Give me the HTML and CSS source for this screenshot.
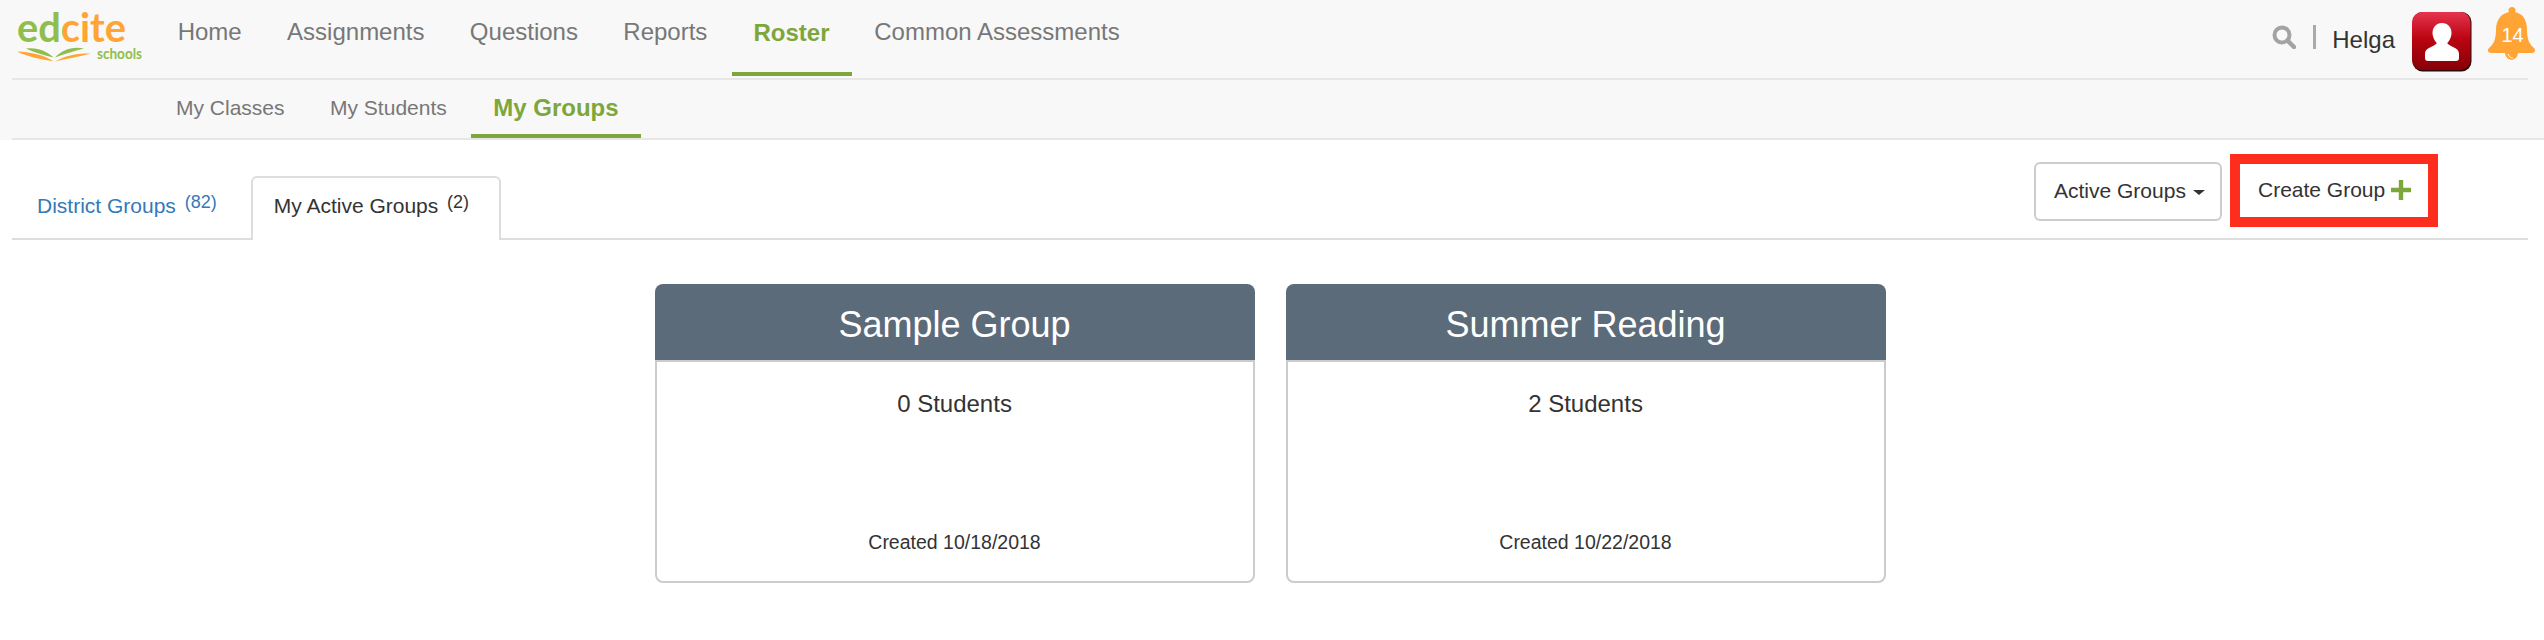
FILE: index.html
```html
<!DOCTYPE html>
<html lang="en">
<head>
    <meta charset="UTF-8">
    <title>Edcite - My Groups</title>
    <link rel="stylesheet" href="styles.css">
</head>
<body>
    <header class="topbar">
        <div class="main-row">
            <svg class="logo" viewBox="12 0 143 78" width="143" height="78">
                <defs>
                    <linearGradient id="logo-fill" gradientUnits="userSpaceOnUse" x1="17" y1="0" x2="126" y2="0">
                        <stop offset="0.42" stop-color="#8fbe4c"/>
                        <stop offset="0.42" stop-color="#ffa435"/>
                    </linearGradient>
                </defs>
                <text class="logo-word" x="17" y="42" font-size="41" fill="url(#logo-fill)" textLength="109" lengthAdjust="spacingAndGlyphs">edcite</text>
                <text class="logo-sub" x="97" y="59" font-size="14.5" textLength="45" lengthAdjust="spacingAndGlyphs">schools</text>
                <path d="M26 48.5 C37 47 47 51 53.5 57.5 C44 55 35 53 26 48.5Z" fill="#8fbe4c"/>
                <path d="M55 57.5 C62 50 72 46 84 48.5 C74 51 64 54 55 57.5Z" fill="#8fbe4c"/>
                <path d="M17 51.5 C30 52 45 55 53.5 61.5 C41 59 28 57 17 51.5Z" fill="#ffa435"/>
                <path d="M55 61.5 C65 55.5 78 53 91 53.5 C79 56.5 66 59 55 61.5Z" fill="#ffa435"/>
            </svg>
            <nav class="main-nav">
                <a href="#">Home</a>
                <a href="#">Assignments</a>
                <a href="#">Questions</a>
                <a href="#">Reports</a>
                <a href="#" class="active">Roster</a>
                <a href="#">Common Assessments</a>
            </nav>
            <div class="user-area">
                <svg class="search-icon" viewBox="0 0 24 24" width="24" height="24">
                    <circle cx="10" cy="10" r="7.5" fill="none" stroke="#a3a3a3" stroke-width="4"/>
                    <path d="M15.5 15.5 L22 22" stroke="#a3a3a3" stroke-width="4.5" stroke-linecap="round"/>
                </svg>
                <span class="separator"></span>
                <span class="user-name">Helga</span>
                <svg class="avatar" viewBox="0 0 60 60" width="60" height="60">
                    <defs>
                        <linearGradient id="avatar-fill" x1="0" y1="0" x2="0" y2="1">
                            <stop offset="0" stop-color="#e6344f"/>
                            <stop offset="0.45" stop-color="#bb0512"/>
                            <stop offset="1" stop-color="#870006"/>
                        </linearGradient>
                    </defs>
                    <rect x="0.5" y="0" width="59" height="59.5" rx="10" fill="#2a0a0c"/>
                    <rect x="0" y="0" width="58.5" height="58" rx="10" fill="url(#avatar-fill)"/>
                    <path d="M30 11 C36 11 39.500 15.500 39.500 21 C39.500 26 36 31 33 33 L27 33 C24 31 20.500 26 20.500 21 C20.500 15.500 24 11 30 11Z" fill="#fff"/>
                    <path d="M25 31 L35 31 C39 36 47 35 47 42 L47 46 Q47 49 44 49 L16 49 Q13 49 13 46 L13 42 C13 35 21 36 25 31Z" fill="#fff"/>
                </svg>
                <div class="bell">
                    <svg viewBox="0 0 47 54" width="47" height="54">
                        <circle cx="24" cy="3.5" r="3.5" fill="#ffa435"/>
                        <path d="M24 5 C13 5 8 13 8 23 C8 33 5 38 1 41 C-1 43 0 46 3 46 L44 46 C47 46 48 43 46 41 C42 38 39 33 39 23 C39 13 35 5 24 5Z" fill="#ffa435"/>
                        <path d="M17 46 C18 55 29 55 30 46Z" fill="#ffa435"/>
                        <path d="M20 47 C21 50 23 51 25 51" fill="none" stroke="#fff" stroke-width="1"/>
                    </svg>
                    <span class="bell-count">14</span>
                </div>
            </div>
        </div>
        <div class="sub-row">
            <nav class="sub-nav">
                <a href="#">My Classes</a>
                <a href="#">My Students</a>
                <a href="#" class="active">My Groups</a>
            </nav>
        </div>
    </header>

    <main class="content">
        <div class="tab-row">
            <div class="tabs">
                <a href="#" class="tab">District Groups <sup>(82)</sup></a>
                <a href="#" class="tab active">My Active Groups <sup>(2)</sup></a>
            </div>
            <div class="tools">
                <button type="button" class="btn-filter">Active Groups <span class="caret"></span></button>
                <button type="button" class="btn-create">Create Group
                    <svg viewBox="0 0 20 20" width="20" height="20"><path d="M7.800 0h4.400v7.800H20v4.400h-7.800V20H7.800v-7.800H0V7.800h7.800z" fill="#7da63b"/></svg>
                </button>
            </div>
        </div>

        <div class="cards">
            <div class="card">
                <div class="card-title">Sample Group</div>
                <div class="card-body">
                    <p class="student-count">0 Students</p>
                    <p class="created">Created 10/18/2018</p>
                </div>
            </div>
            <div class="card">
                <div class="card-title">Summer Reading</div>
                <div class="card-body">
                    <p class="student-count">2 Students</p>
                    <p class="created">Created 10/22/2018</p>
                </div>
            </div>
        </div>
    </main>
</body>
</html>
```

FILE: styles.css
```css
* {
    box-sizing: border-box;
}
body {
    font-family: "Liberation Sans", Arial, sans-serif;
    background-color: #fff;
    color: #333;
    margin: 0;
    padding: 0;
    overflow: hidden;
}
a {
    text-decoration: none;
}

/* top bars */
.topbar {
    background-color: #f8f8f8;
    height: 140px;
}
.main-row {
    display: flex;
    height: 80px;
    margin: 0 16px 0 12px;
    border-bottom: 2px solid #e7e7e7;
}
.logo {
    flex: none;
}
.logo-word {
    font-family: Lato, sans-serif;
    font-weight: 700;
}
.logo-sub {
    font-family: Lato, sans-serif;
    font-weight: 700;
    fill: #8fbe4c;
}
.main-nav {
    display: flex;
}
.main-nav a {
    display: block;
    height: 76px;
    padding: 15px 22.7px 0;
    font-size: 24px;
    line-height: 34px;
    color: #777;
}
.main-nav a.active {
    margin-left: 1.5px;
    padding: 16px 22px 0;
    font-weight: bold;
    color: #7da63b;
    border-bottom: 4px solid #7da63b;
}
.user-area {
    display: flex;
    align-items: center;
    margin-left: auto;
    margin-right: -7px;
}
.search-icon {
    margin-bottom: 4px;
}
.separator {
    width: 3px;
    height: 24px;
    margin: 0 16px 4px 17px;
    background-color: #aaa;
}
.user-name {
    font-size: 24px;
    line-height: 34px;
    margin-top: 2px;
}
.avatar {
    margin: 6px 16px 0 17px;
}
.bell {
    position: relative;
    width: 47px;
    height: 54px;
    margin-bottom: 10px;
}
.bell svg {
    display: block;
    overflow: visible;
}
.bell-count {
    position: absolute;
    top: 17px;
    left: 0;
    width: 49px;
    text-align: center;
    font-size: 20px;
    line-height: 22px;
    color: #fff;
}
.sub-row {
    height: 60px;
    margin-left: 12px;
    border-bottom: 2px solid #e7e7e7;
}
.sub-nav {
    display: flex;
    margin-left: 141px;
}
.sub-nav a {
    display: block;
    height: 58px;
    padding: 13px 22.5px 0 23px;
    font-size: 21px;
    line-height: 30px;
    color: #777;
}
.sub-nav a.active {
    margin-left: 2px;
    padding: 13px 22px 0;
    font-size: 24px;
    font-weight: bold;
    color: #7da63b;
    border-bottom: 4px solid #7da63b;
}

/* tabs and buttons */
.content {
    margin: 0 16px 0 12px;
}
.tab-row {
    display: flex;
    justify-content: space-between;
    height: 100px;
    border-bottom: 2px solid #ddd;
}
.tabs {
    display: flex;
    align-self: flex-end;
    margin-bottom: -2px;
}
.tab {
    display: block;
    height: 64px;
    padding: 15px 34px 0 25px;
    font-size: 21px;
    line-height: 30px;
    color: #337ab7;
}
.tab sup {
    margin-left: 3px;
    font-size: 18px;
    line-height: 0;
    vertical-align: 5px;
}
.tab.active {
    padding: 13px 30px 0 21px;
    color: #333;
    background-color: #fff;
    border: 2px solid #ddd;
    border-bottom: none;
    border-radius: 6px 6px 0 0;
}
.tools {
    display: flex;
    align-items: center;
    align-self: flex-start;
    margin: 14px 90px 0 0;
}
button {
    font-family: inherit;
    font-size: 21px;
    color: #333;
    background-color: #fff;
    cursor: pointer;
}
.btn-filter {
    display: flex;
    align-items: center;
    width: 188px;
    height: 59px;
    margin: 2px 8px 0 0;
    padding: 0 18px 2px;
    border: 2px solid #ccc;
    border-radius: 6px;
    white-space: pre;
}
.caret {
    width: 0;
    height: 0;
    margin: 3px 0 0 1px;
    border-top: 5px solid #333;
    border-left: 6px solid transparent;
    border-right: 6px solid transparent;
}
.btn-create {
    display: flex;
    align-items: center;
    justify-content: space-between;
    width: 208px;
    height: 73px;
    padding: 0 17px 2px 18px;
    border: 10px solid #ff2d1e;
    white-space: nowrap;
}

/* group cards */
.cards {
    display: flex;
    justify-content: center;
    gap: 31px;
    margin-top: 44px;
}
.card {
    display: flex;
    flex-direction: column;
    width: 600px;
    height: 299px;
}
.card-title {
    height: 76px;
    font-size: 36px;
    line-height: 82px;
    text-align: center;
    color: #fff;
    background-color: #5c6b7a;
    border-radius: 8px 8px 0 0;
}
.card-body {
    display: flex;
    flex: 1;
    flex-direction: column;
    padding: 25px 0 24px;
    text-align: center;
    border: 2px solid #ccc;
    border-radius: 0 0 8px 8px;
}
.card-body p {
    margin: 0;
}
.student-count {
    font-size: 24px;
    line-height: 34px;
}
.created {
    margin-top: auto !important;
    font-size: 19.5px;
    line-height: 30px;
}
```
